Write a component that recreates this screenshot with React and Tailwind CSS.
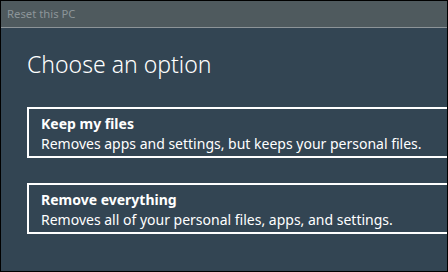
export default function App() {
  const options = [
    {
      title: "Keep my files",
      desc: "Removes apps and settings, but keeps your personal files.",
    },
    {
      title: "Remove everything",
      desc: "Removes all of your personal files, apps, and settings.",
    },
  ];

  return (
    <div
      className="w-[448px] h-[272px] border border-black overflow-hidden bg-[#334553] flex flex-col"
      style={{ fontFamily: '"Noto Sans", "Open Sans", sans-serif' }}
    >
      <div className="h-[27px] shrink-0 bg-[#4f5a5e] border-b border-[#8d9498] flex items-center px-[6px]">
        <span className="text-[11.3px] text-[#8c9599] leading-none">Reset this PC</span>
      </div>
      <div className="pl-[26px] pt-[21px]">
        <h1 className="text-[23px] font-light text-white leading-[30px]">Choose an option</h1>
        <div className="mt-[28px] flex flex-col gap-[25px] w-[440px]">
          {options.map((opt) => (
            <div
              key={opt.title}
              className="h-[51px] border-2 border-white px-[12px] pt-[6px] text-white"
            >
              <p className="text-[14px] font-bold leading-[18px]">{opt.title}</p>
              <p className="text-[14px] leading-[22px] whitespace-nowrap">{opt.desc}</p>
            </div>
          ))}
        </div>
      </div>
    </div>
  );
}
